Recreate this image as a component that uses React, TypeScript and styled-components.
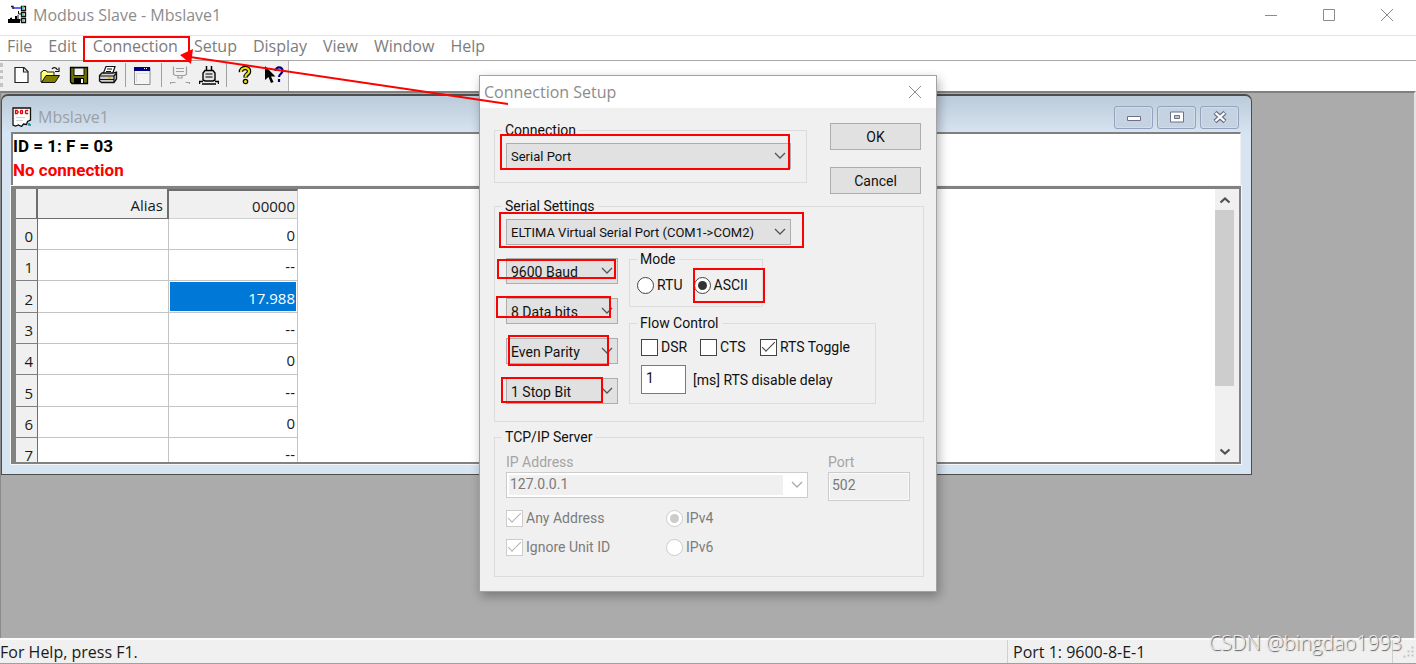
import React from "react";
import styled, { createGlobalStyle } from "styled-components";

const UI_FONT = '"Open Sans", "Noto Sans", sans-serif';
const DIALOG_FONT = 'Roboto, "Liberation Sans", sans-serif';

const GlobalStyle = createGlobalStyle`
  *, *::before, *::after { box-sizing: border-box; }
  body { margin: 0; font-family: ${UI_FONT}; font-size: 16px; color: #1a1a1a; }
  button, input, select { font: inherit; color: inherit; margin: 0; }
`;

/* ---------- main window ---------- */

const AppWindow = styled.div`
  position: relative;
  display: flex;
  flex-direction: column;
  height: 100vh;
  overflow: hidden;
  background: #fff;
`;

const TitleBar = styled.header`
  display: flex;
  align-items: center;
  height: 36px;
  padding: 0 0 5px 7px;
  border-bottom: 1px solid #e2e2e2;
  color: #8c8c8c;
`;

const Title = styled.h1`
  flex: 1;
  margin: 0;
  padding-left: 6px;
  font-size: 16px;
  font-weight: 400;
  line-height: 20px;
`;

const CaptionButton = styled.button`
  display: grid;
  place-items: center;
  width: 58px;
  height: 30px;
  padding: 0;
  border: 0;
  background: none;
`;

const MenuBar = styled.nav`
  display: flex;
  align-items: center;
  height: 25px;
  border-bottom: 1px solid #a8a8a8;
`;

const MenuItem = styled.button`
  height: 24px;
  padding: 0 9px 4px 7px;
  border: 0;
  background: none;
  color: #7c7c7c;
  line-height: 20px;
`;

const ToolBar = styled.div`
  display: flex;
  align-self: flex-start;
  align-items: center;
  height: 30px;
  padding-bottom: 2px;
  border-right: 1px solid #b4b4b4;
  background: #f0f0f0;
`;

const Grip = styled.span`
  width: 6px;
  height: 24px;
  border-left: 3px dotted #c4c4c4;
`;

const ToolButton = styled.button`
  display: grid;
  place-items: center;
  width: 29px;
  height: 28px;
  padding: 0;
  border: 0;
  background: none;
`;

const ToolSeparator = styled.span`
  width: 1px;
  height: 24px;
  margin: 0 3px;
  background: #a0a0a0;
`;

const Workspace = styled.main`
  position: relative;
  flex: 1;
  min-height: 0;
  overflow: hidden;
  border-top: 2px solid #808080;
  border-left: 1px solid #8a8a8a;
  border-right: 2px solid #e3e3e3;
  background: #ababab;
`;

const StatusBar = styled.footer`
  display: flex;
  height: 26px;
  border-top: 2px solid #fafafa;
  border-bottom: 1px solid #a0a0a0;
  background: #f0f0f0;
  line-height: 25px;
`;

const StatusCell = styled.span<{ $width?: number }>`
  flex: ${(p) => (p.$width ? `0 0 ${p.$width}px` : "1")};
  padding-left: ${(p) => (p.$width ? "5px" : "0")};
  border-left: ${(p) => (p.$width ? "1px solid #d0d0d0" : "0")};
`;

const Watermark = styled.div`
  position: absolute;
  right: 14px;
  bottom: 7px;
  font-size: 20px;
  font-weight: 300;
  line-height: 28px;
  color: #ececec;
  text-shadow: 1px 1px 1px #555;
`;

/* ---------- document window ---------- */

const DocWindow = styled.section`
  position: absolute;
  left: 0;
  top: 1px;
  width: 1251px;
  height: 381px;
  display: flex;
  flex-direction: column;
  padding: 0 10px 9px 9px;
  border: 1px solid #4d4d4d;
  border-top-width: 2px;
  border-radius: 7px 7px 0 0;
  background: linear-gradient(#bccbd9, #d7e4f2 38px, #d7e4f2);
`;

const DocTitleBar = styled.header`
  display: flex;
  align-items: center;
  gap: 4px;
  height: 36px;
  padding: 6px 2px 0 1px;
`;

const DocTitle = styled.h2`
  flex: 1;
  margin: 0;
  padding-left: 2px;
  color: #9a9fa6;
  font-size: 16px;
  font-weight: 400;
  line-height: 20px;
`;

const DocButton = styled.button`
  display: grid;
  place-items: center;
  width: 39px;
  height: 23px;
  padding: 0;
  border: 1px solid #94a2bd;
  border-radius: 3px;
  background: #c5d2e1;
  box-shadow: inset 0 0 0 1px #d2dde9;
`;

const InfoPane = styled.div`
  height: 54px;
  border: solid #808080;
  border-width: 2px 0 0 2px;
  border-right: 1px solid #f0f0f0;
  background: #fff;
  font: 700 17px/24px ${DIALOG_FONT};
  color: #000;
`;

const InfoLine = styled.p<{ $alert?: boolean }>`
  margin: 0;
  color: ${(p) => (p.$alert ? "#f00" : "#000")};
`;

const GridPane = styled.div`
  display: flex;
  flex: 1;
  min-height: 0;
  margin-bottom: 1px;
  overflow: hidden;
  border: solid #828282;
  border-width: 3px 2px 2px 5px;
  outline: 1px solid #f6f6f6;
  background: #fff;
`;

const GridScroll = styled.div`
  flex: 1;
  overflow: hidden;
`;

const RegisterTable = styled.table`
  width: 282px;
  table-layout: fixed;
  border-collapse: separate;
  border-spacing: 0;
  color: #1a1a1a;
  font-size: 15px;
`;

const Row = styled.tr`
  height: 31px;
  &:nth-child(3n) { height: 32px; }
`;

const HeadCell = styled.th<{ $dark?: boolean }>`
  height: 30px;
  padding: 2px ${(p) => (p.$dark ? 2 : 4)}px 0 0;
  border: solid #6e6e6e;
  border-width: ${(p) => (p.$dark ? "2px 1px 1px 0" : "0 2px 1px 0")};
  border-right-color: ${(p) => (p.$dark ? "#c8c8c8" : "#6e6e6e")};
  border-bottom-color: ${(p) => (p.$dark ? "#d0d0d0" : "#6e6e6e")};
  background: #f0f0f0;
  font-weight: 400;
  line-height: 20px;
  text-align: right;
`;

const RowHead = styled.th`
  padding: 4px 4px 0 0;
  border-right: 1px solid #6e6e6e;
  border-bottom: 1px solid #808080;
  background: #f0f0f0;
  font-weight: 400;
  line-height: 20px;
  text-align: right;
`;

const Cell = styled.td<{ $selected?: boolean }>`
  padding: 2px 2px 0 0;
  border-right: 1px solid #c4c4c4;
  border-bottom: 1px solid #c4c4c4;
  background: ${(p) => (p.$selected ? "#0078d7" : "#fff")};
  background-clip: padding-box;
  color: ${(p) => (p.$selected ? "#fff" : "#1a1a1a")};
  box-shadow: ${(p) => (p.$selected ? "inset 0 0 0 1px #fff" : "none")};
  line-height: 20px;
  text-align: right;
`;

const ScrollBar = styled.div`
  display: flex;
  flex-direction: column;
  width: 24px;
  padding-right: 5px;
  background: #f0f0f0;
`;

const ScrollButton = styled.button`
  display: grid;
  place-items: center;
  height: 21px;
  padding: 0;
  border: 0;
  background: none;
`;

const ScrollTrack = styled.div`
  flex: 1;
`;

const ScrollThumb = styled.div`
  height: 76%;
  background: #cdcdcd;
`;

/* ---------- connection dialog ---------- */

const Dialog = styled.section`
  position: absolute;
  left: 479px;
  top: 75px;
  width: 458px;
  border: 1px solid #a2a2a2;
  background: #f0f0f0;
  box-shadow: 2px 4px 10px rgba(0, 0, 0, 0.3);
  color: #111;
  font-family: ${DIALOG_FONT};
  font-size: 14px;
`;

const DialogTitleBar = styled.header`
  display: flex;
  align-items: center;
  height: 32px;
  padding-left: 4px;
  background: #fff;
  color: #8c8c8c;
  font-family: ${UI_FONT};
`;

const DialogTitle = styled.h2`
  flex: 1;
  margin: 0;
  font-size: 16px;
  font-weight: 400;
  line-height: 20px;
`;

const DialogClose = styled(CaptionButton)`
  width: 42px;
`;

const DialogBody = styled.form`
  display: flex;
  flex-direction: column;
  gap: 7px;
  padding: 14px 12px 14px 14px;
`;

const TopRow = styled.div`
  display: flex;
  justify-content: space-between;
  align-items: flex-start;
  height: 69px;
  padding-right: 3px;
`;

const ButtonColumn = styled.div`
  display: flex;
  flex-direction: column;
  gap: 17px;
  padding-top: 1px;
`;

const PushButton = styled.button`
  width: 91px;
  height: 27px;
  padding: 0;
  border: 1px solid #adadad;
  background: #e1e1e1;
`;

const Group = styled.fieldset<{ $width?: number; $height: number; $pad?: number }>`
  width: ${(p) => (p.$width ? `${p.$width}px` : "auto")};
  min-width: 0;
  min-height: ${(p) => p.$height}px;
  margin: 0;
  padding: 0 ${(p) => p.$pad ?? 11}px;
  border: 1px solid #dcdcdc;
`;

const Legend = styled.legend<{ $indent?: number }>`
  margin-left: ${(p) => p.$indent ?? -4}px;
  padding: 0 3px;
  line-height: 16px;
`;

const PickerBox = styled.div<{ $width: number }>`
  display: grid;
  align-items: center;
  width: ${(p) => p.$width}px;
  height: 26px;
  > * { grid-area: 1 / 1; }
  > svg { justify-self: end; margin-right: 5px; pointer-events: none; }
`;

const PickerSelect = styled.select<{ $compact?: boolean }>`
  width: 100%;
  height: 26px;
  padding: 1px 20px 0 4px;
  border: 1px solid #adadad;
  border-radius: 0;
  background: #e1e1e1;
  font-size: ${(p) => (p.$compact ? 13 : 14)}px;
  appearance: none;
`;

const AddressInput = styled.input`
  width: 100%;
  height: 26px;
  padding: 0 24px 2px 3px;
  border: 1px solid #cccccc;
  border-radius: 0;
  background: linear-gradient(#f0f0f0, #f0f0f0) 2px 2px / calc(100% - 26px) calc(100% - 4px) no-repeat #fff;
  color: #7a7a7a;
`;

const SerialGrid = styled.div`
  display: flex;
  gap: 11px;
  margin-top: 6px;
`;

const PickerColumn = styled.div`
  display: flex;
  flex-direction: column;
  gap: 14px;
  padding-top: 7px;
`;

const GroupColumn = styled.div`
  display: flex;
  flex-direction: column;
  gap: 8px;
`;

const Line = styled.div<{ $gap: number; $top: number }>`
  display: flex;
  align-items: center;
  gap: ${(p) => p.$gap}px;
  padding-top: ${(p) => p.$top}px;
`;

const Choice = styled.label<{ $disabled?: boolean; $width?: number }>`
  display: flex;
  align-items: center;
  gap: 3px;
  width: ${(p) => (p.$width ? `${p.$width}px` : "auto")};
  color: ${(p) => (p.$disabled ? "#7c7c7c" : "#111")};
  line-height: 18px;
  white-space: nowrap;
`;

const Tick = styled.input`
  display: grid;
  flex: none;
  place-items: center;
  width: 17px;
  height: 17px;
  border: 1px solid #444;
  background: #fff;
  appearance: none;
  &:checked::before {
    content: "";
    width: 13px;
    height: 6px;
    margin-top: -4px;
    border: solid #444;
    border-width: 0 0 1px 1px;
    transform: rotate(-45deg);
  }
  &:disabled { border-color: #ccc; }
  &:disabled::before { border-color: #b4b4b4; }
`;

const Dot = styled.input`
  display: grid;
  flex: none;
  place-items: center;
  width: 17px;
  height: 17px;
  border: 1px solid #444;
  border-radius: 50%;
  background: #fff;
  appearance: none;
  &:checked::before {
    content: "";
    width: 9px;
    height: 9px;
    border-radius: 50%;
    background: #333;
  }
  &:disabled { border-color: #ccc; }
  &:disabled::before { background: #ccc; }
`;

const DelayInput = styled.input`
  width: 45px;
  height: 29px;
  padding: 0 4px 4px;
  border: 1px solid #7a7a7a;
`;

const Fields = styled.div`
  display: flex;
  gap: 20px;
  padding-top: 8px;
`;

const Field = styled.label`
  display: flex;
  flex-direction: column;
  gap: 1px;
  color: #a4a4a4;
  line-height: 18px;
`;

const PortInput = styled.input`
  width: 82px;
  height: 29px;
  padding: 0 3px 4px;
  border: 1px solid #ccc;
  background: #f0f0f0;
  box-shadow: inset 0 0 0 1px #fafafa;
  color: #7a7a7a;
`;

/* ---------- red call-outs drawn over the windows ---------- */

const Callout = styled.div<{ $x: number; $y: number; $w: number; $h: number }>`
  position: absolute;
  left: ${(p) => p.$x}px;
  top: ${(p) => p.$y}px;
  width: ${(p) => p.$w}px;
  height: ${(p) => p.$h}px;
  border: 2px solid #f00;
  pointer-events: none;
`;

const Arrow = styled.svg`
  position: absolute;
  left: 0;
  top: 0;
  pointer-events: none;
`;

/* ---------- drawings ---------- */

const Svg = ({ children, size = 20 }: { children: React.ReactNode; size?: number }) => (
  <svg width={size} height={size} viewBox={`0 0 ${size} ${size}`} fill="none" aria-hidden="true">
    {children}
  </svg>
);

const AppIcon = () => (
  <Svg>
    <path d="M6 3h8" stroke="#22f" strokeWidth="1.4" />
    <path d="M4 1.500h2v2.500M14.500 1.500h4v4h-4zM14.500 7.500h4v4h-4zM14.500 13.500h4v4h-4z" stroke="#111" strokeWidth="1.300" />
    <path d="M16 1v4M16 8v3M16 14v3" stroke="#3c6" strokeWidth="1.500" />
    <path d="M14 9h-2.500V6M14 15h-3v-5" stroke="#111" />
    <path d="M1 18v-4h2v-1l2-.500V14h3v-3h2v3h3v4z" fill="#000" />
  </Svg>
);

const NewIcon = () => (
  <Svg>
    <path d="M4 2.500h9l4 4v11H4z" fill="#fff" stroke="#222" strokeWidth="1.200" />
    <path d="M12.500 2.500v4.500H17" stroke="#222" strokeWidth="1.200" />
  </Svg>
);

const OpenIcon = () => (
  <Svg>
    <path d="M12 4c1-2 4-2 5.500 1" stroke="#111" strokeWidth="1.200" />
    <path d="M19 2.500v4h-4" stroke="#111" strokeWidth="1.200" />
    <path d="M1 17V7h1l1-1.500h3L7 7h7v3.500H7L2 17z" fill="#ffff7a" stroke="#222" />
    <path d="M1.500 17.500L6 10.500h13.500l-4.500 7z" fill="#808000" stroke="#111" />
  </Svg>
);

const SaveIcon = () => (
  <Svg>
    <path d="M1.500 2.500h17v16H3l-1.500-1.500z" fill="#6f6f00" stroke="#000" strokeWidth="1.300" />
    <path d="M5 3h10v7.500H5z" fill="#f2f2f2" stroke="#111" />
    <path d="M5 13h10v5.500H5z" fill="#000" />
    <path d="M12 14h2v4h-2z" fill="#fff" />
  </Svg>
);

const PrintIcon = () => (
  <Svg>
    <path d="M5 9l3-7.500h9L14.500 9" fill="#fff" stroke="#111" strokeWidth="1.200" />
    <path d="M9 4h5M8 6.500h5" stroke="#111" />
    <path d="M1.500 10.500L4 8h11l3.500-1v7L16 17.500H3.500L1.500 16z" fill="#d0d0d0" stroke="#111" strokeWidth="1.300" />
    <path d="M2 11h14v6M16 11l2.500-3M2 14.500h14" stroke="#111" strokeWidth="1.200" />
    <path d="M10 13h3" stroke="#d4c400" strokeWidth="1.500" />
  </Svg>
);

const DefinitionIcon = () => (
  <Svg>
    <path d="M0.500 2.500h15.500v17H.500z" fill="#f4f4f4" stroke="#8a8a8a" />
    <path d="M0 2h16v4H0z" fill="#000080" />
    <path d="M10 3.500h4" stroke="#fff" strokeDasharray="1 1" />
    <path d="M2 8.500h12M2.500 8v9" stroke="#ddd" />
  </Svg>
);

const ConnectIcon = () => (
  <Svg>
    <path d="M3.500 1.500v8l2 1h9l2-1v-8M6 3.500h8M6 6.500h8M8 11v2h4v-2" stroke="#a0a0a0" strokeWidth="1.200" />
    <path d="M.500 19v-1.500h5M19.500 19v-1.500h-4" stroke="#a0a0a0" strokeWidth="1.200" />
  </Svg>
);

const DisconnectIcon = () => (
  <Svg>
    <path d="M7.500 1v5M12.500 1v5" stroke="#000" strokeWidth="1.500" />
    <path d="M6 5.500h8l2 2.500v7l-2 1H6l-2-1V8z" fill="#e4e4e4" stroke="#000" strokeWidth="1.400" />
    <path d="M6.500 9h7M6.500 12h7" stroke="#000" strokeWidth="1.200" />
    <path d="M0.500 19v-2.500H4M19.500 19v-2.500H16M3 19h14" stroke="#000" strokeWidth="1.400" />
  </Svg>
);

const HelpIcon = () => (
  <Svg>
    <path d="M6 7c-.500-5 8.500-5.500 8-.500 0 2.500-3.500 2.500-3.500 6" stroke="#000" strokeWidth="4.600" />
    <path d="M6 7c-.500-5 8.500-5.500 8-.500 0 2.500-3.500 2.500-3.500 5.500" stroke="#e8e000" strokeWidth="2.200" />
    <circle cx="10.500" cy="16.500" r="2.200" fill="#e8e000" stroke="#000" strokeWidth="1.200" />
  </Svg>
);

const PointerHelpIcon = () => (
  <Svg>
    <path d="M1 1v14l3.500-3L7 18l2.500-1-2.500-5.500h4.500z" fill="#000" />
    <path d="M11.500 6c0-5 7.500-4.500 7 0 0 2.500-3.500 3-3.500 6M15 14v3" stroke="#000080" strokeWidth="2.200" />
  </Svg>
);

const DocIcon = () => (
  <Svg>
    <path d="M1 1h17.500v12l-3 1.500-1 3-3-.500-2 2.500-3-1.500-3 1L1 18z" fill="#fff" stroke="#111" strokeWidth="1.300" />
    <path
      d="M3.500 3.500h1.500l1 1v1l-1 1H3.500zM9 3.500h1l.500.500v2l-.500.500H9l-.500-.500V4zM16 4l-.500-.500H14l-.500.500v2l.500.500h1.500L16 6"
      stroke="#e80000"
      strokeWidth="1.300"
    />
    <path d="M4 10.500h9M4 13.500h7" stroke="#d2d2d2" />
    <path d="M17 16v2h2" stroke="#088" strokeWidth="1.500" />
  </Svg>
);

const Chevron = ({ color = "#555" }: { color?: string }) => (
  <svg width="12" height="8" viewBox="0 0 12 8" fill="none" aria-hidden="true">
    <path d="M1 1l5 5 5-5" stroke={color} strokeWidth="1.3" />
  </svg>
);

const ScrollArrow = ({ down }: { down?: boolean }) => (
  <svg width="12" height="8" viewBox="0 0 12 8" fill="none" aria-hidden="true">
    <path d={down ? "M1.500 1.500L6 5.500l4.500-4" : "M1.500 6.500L6 2.500l4.500 4"} stroke="#505050" strokeWidth="2.200" />
  </svg>
);

const CloseGlyph = () => (
  <Svg size={14}>
    <path d="M1 1l12 12M13 1L1 13" stroke="#8c8c8c" />
  </Svg>
);

/* ---------- data ---------- */

const menus = ["File", "Edit", "Connection", "Setup", "Display", "View", "Window", "Help"];

const registers = ["0", "--", "17.988", "--", "0", "--", "0", "--"];
const selectedRegister = 2;

const callouts = [
  [83, 36, 107, 26],
  [500, 134, 290, 36],
  [499, 212, 305, 36],
  [497, 259, 119, 20],
  [496, 296, 115, 22],
  [508, 335, 101, 31],
  [501, 377, 102, 26],
  [693, 268, 72, 35],
];

type PickerProps = { label: string; value: string; width: number; compact?: boolean };

const Picker = ({ label, value, width, compact }: PickerProps) => (
  <PickerBox $width={width}>
    <PickerSelect aria-label={label} defaultValue={value} $compact={compact}>
      <option>{value}</option>
    </PickerSelect>
    <Chevron />
  </PickerBox>
);

const ConnectionDialog = () => (
  <Dialog role="dialog" aria-labelledby="setup-title">
    <DialogTitleBar>
      <DialogTitle id="setup-title">Connection Setup</DialogTitle>
      <DialogClose type="button" aria-label="Close dialog">
        <CloseGlyph />
      </DialogClose>
    </DialogTitleBar>
    <DialogBody onSubmit={(e) => e.preventDefault()}>
      <TopRow>
        <Group $width={313} $height={61}>
          <Legend>Connection</Legend>
          <Line $gap={0} $top={5}>
            <Picker label="Connection" value="Serial Port" width={285} compact />
          </Line>
        </Group>
        <ButtonColumn>
          <PushButton type="submit">OK</PushButton>
          <PushButton type="button">Cancel</PushButton>
        </ButtonColumn>
      </TopRow>

      <Group $height={224}>
        <Legend>Serial Settings</Legend>
        <Line $gap={0} $top={5}>
          <Picker label="Serial port" value="ELTIMA Virtual Serial Port (COM1->COM2)" width={285} compact />
        </Line>
        <SerialGrid>
          <PickerColumn>
            <Picker label="Baud rate" value="9600 Baud" width={112} />
            <Picker label="Data bits" value="8 Data bits" width={112} />
            <Picker label="Parity" value="Even Parity" width={112} />
            <Picker label="Stop bits" value="1 Stop Bit" width={112} />
          </PickerColumn>
          <GroupColumn>
            <Group $width={134} $height={56} $pad={7}>
              <Legend $indent={0}>Mode</Legend>
              <Line $gap={11} $top={9}>
                <Choice>
                  <Dot type="radio" name="mode" />
                  RTU
                </Choice>
                <Choice>
                  <Dot type="radio" name="mode" defaultChecked />
                  ASCII
                </Choice>
              </Line>
            </Group>
            <Group $width={247} $height={89}>
              <Legend>Flow Control</Legend>
              <Line $gap={0} $top={7}>
                <Choice $width={59}>
                  <Tick type="checkbox" />
                  DSR
                </Choice>
                <Choice $width={60}>
                  <Tick type="checkbox" />
                  CTS
                </Choice>
                <Choice>
                  <Tick type="checkbox" defaultChecked />
                  RTS Toggle
                </Choice>
              </Line>
              <Line $gap={7} $top={9}>
                <DelayInput id="rts-delay" defaultValue="1" />
                <label htmlFor="rts-delay">[ms] RTS disable delay</label>
              </Line>
            </Group>
          </GroupColumn>
        </SerialGrid>
      </Group>

      <Group $height={148}>
        <Legend>TCP/IP Server</Legend>
        <Fields>
          <Field>
            IP Address
            <PickerBox $width={302}>
              <AddressInput defaultValue="127.0.0.1" disabled />
              <Chevron color="#aaa" />
            </PickerBox>
          </Field>
          <Field>
            Port
            <PortInput defaultValue="502" disabled />
          </Field>
        </Fields>
        <Line $gap={0} $top={8}>
          <Choice $disabled $width={160}>
            <Tick type="checkbox" defaultChecked disabled />
            Any Address
          </Choice>
          <Choice $disabled>
            <Dot type="radio" name="ip" defaultChecked disabled />
            IPv4
          </Choice>
        </Line>
        <Line $gap={0} $top={11}>
          <Choice $disabled $width={160}>
            <Tick type="checkbox" defaultChecked disabled />
            Ignore Unit ID
          </Choice>
          <Choice $disabled>
            <Dot type="radio" name="ip" disabled />
            IPv6
          </Choice>
        </Line>
      </Group>
    </DialogBody>
  </Dialog>
);

const DocumentWindow = () => (
  <DocWindow>
    <DocTitleBar>
      <DocIcon />
      <DocTitle>Mbslave1</DocTitle>
      <DocButton aria-label="Minimize document">
        <Svg size={14}>
          <path d="M.500 6.500h13v4H.500z" fill="#fff" stroke="#6b7187" />
        </Svg>
      </DocButton>
      <DocButton aria-label="Maximize document">
        <Svg size={14}>
          <path d="M.500 2h13v10H.500z" fill="#fff" stroke="#6b7187" />
          <path d="M4.500 5.500h5v3h-5z" fill="#b8c6d8" stroke="#6b7187" />
        </Svg>
      </DocButton>
      <DocButton aria-label="Close document">
        <Svg size={14}>
          <path d="M2 2.500l10 9M12 2.500l-10 9" stroke="#6b7187" strokeWidth="4.500" />
          <path d="M2.500 3l9 8M11.500 3l-9 8" stroke="#fff" strokeWidth="2.300" />
        </Svg>
      </DocButton>
    </DocTitleBar>
    <InfoPane>
      <InfoLine>ID = 1: F = 03</InfoLine>
      <InfoLine $alert>No connection</InfoLine>
    </InfoPane>
    <GridPane>
      <GridScroll>
        <RegisterTable>
          <colgroup>
            <col style={{ width: 22 }} />
            <col style={{ width: 131 }} />
            <col style={{ width: 129 }} />
          </colgroup>
          <thead>
            <tr>
              <HeadCell aria-label="Row" />
              <HeadCell>Alias</HeadCell>
              <HeadCell $dark>00000</HeadCell>
            </tr>
          </thead>
          <tbody>
            {registers.map((value, i) => (
              <Row key={i}>
                <RowHead scope="row">{i}</RowHead>
                <Cell />
                <Cell $selected={i === selectedRegister}>{value}</Cell>
              </Row>
            ))}
          </tbody>
        </RegisterTable>
      </GridScroll>
      <ScrollBar>
        <ScrollButton aria-label="Scroll up">
          <ScrollArrow />
        </ScrollButton>
        <ScrollTrack>
          <ScrollThumb />
        </ScrollTrack>
        <ScrollButton aria-label="Scroll down">
          <ScrollArrow down />
        </ScrollButton>
      </ScrollBar>
    </GridPane>
  </DocWindow>
);

export default function App() {
  return (
    <AppWindow>
      <GlobalStyle />
      <TitleBar>
        <AppIcon />
        <Title>Modbus Slave - Mbslave1</Title>
        <CaptionButton aria-label="Minimize">
          <Svg size={14}>
            <path d="M1 7.500h12" stroke="#8c8c8c" />
          </Svg>
        </CaptionButton>
        <CaptionButton aria-label="Maximize">
          <Svg size={14}>
            <path d="M1.500 1.500h11v11h-11z" stroke="#8c8c8c" />
          </Svg>
        </CaptionButton>
        <CaptionButton aria-label="Close">
          <CloseGlyph />
        </CaptionButton>
      </TitleBar>
      <MenuBar>
        {menus.map((menu) => (
          <MenuItem key={menu}>{menu}</MenuItem>
        ))}
      </MenuBar>
      <ToolBar role="toolbar">
        <Grip />
        <ToolButton aria-label="New"><NewIcon /></ToolButton>
        <ToolButton aria-label="Open"><OpenIcon /></ToolButton>
        <ToolButton aria-label="Save"><SaveIcon /></ToolButton>
        <ToolButton aria-label="Print"><PrintIcon /></ToolButton>
        <ToolSeparator />
        <ToolButton aria-label="Slave definition"><DefinitionIcon /></ToolButton>
        <ToolSeparator />
        <ToolButton aria-label="Connect" disabled><ConnectIcon /></ToolButton>
        <ToolButton aria-label="Disconnect"><DisconnectIcon /></ToolButton>
        <ToolSeparator />
        <ToolButton aria-label="About"><HelpIcon /></ToolButton>
        <ToolButton aria-label="Context help"><PointerHelpIcon /></ToolButton>
      </ToolBar>
      <Workspace>
        <DocumentWindow />
      </Workspace>
      <StatusBar>
        <StatusCell>For Help, press F1.</StatusCell>
        <StatusCell $width={385}>Port 1: 9600-8-E-1</StatusCell>
        <StatusCell $width={24}>
          <Svg size={18}>
            <path d="M13 10h3v3h-3zM9 14h3v3H9zM13 14h3v3h-3zM5 18h3v-3H5zM13 6h3v3h-3zM9 10h3v3H9z" fill="#c4c4c4" stroke="#f0f0f0" />
          </Svg>
        </StatusCell>
      </StatusBar>
      <ConnectionDialog />
      {callouts.map(([x, y, w, h]) => (
        <Callout key={`${x}-${y}`} $x={x} $y={y} $w={w} $h={h} />
      ))}
      <Arrow width="520" height="110" viewBox="0 0 520 110" aria-hidden="true">
        <path d="M508 104L190 57" stroke="#f00" strokeWidth="2" />
        <path d="M180 55l13-6-2 15z" fill="#f00" />
      </Arrow>
      <Watermark>CSDN @bingdao1993</Watermark>
    </AppWindow>
  );
}
